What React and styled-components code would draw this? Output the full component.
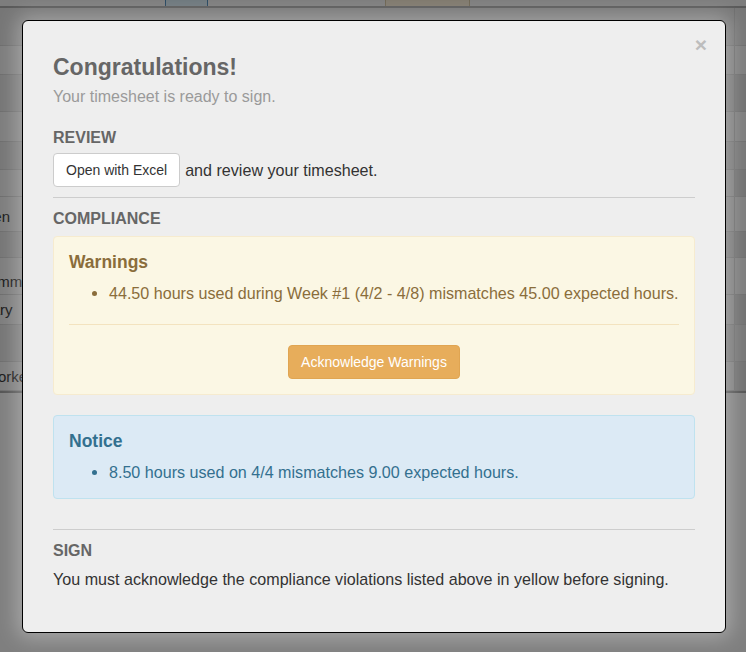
import React from "react";
import styled, { createGlobalStyle } from "styled-components";

const GlobalStyle = createGlobalStyle`
  html, body { margin: 0; padding: 0; }
  body {
    background: #fff;
    font-family: "Liberation Sans", Arial, Helvetica, sans-serif;
    color: #333;
    overflow: hidden;
  }
`;

const Page = styled.div`
  position: relative;
  width: 746px;
  height: 652px;
  overflow: hidden;
  background: #fff;
`;

const TopBar = styled.div`
  display: flex;
  gap: 177px;
  height: 6px;
  padding-left: 165px;
  background: #fafafa;
  border-bottom: 2px solid #b2b2b2;
  box-shadow: 0 2px 5px rgba(0, 0, 0, 0.25);
`;

const Tab = styled.div`
  width: ${(p) => p.w}px;
  box-sizing: border-box;
  background: ${(p) => (p.tone === "blue" ? "#dcf0fa" : "#fff2da")};
  border-left: 1px solid ${(p) => (p.tone === "blue" ? "#4f8ec0" : "#d9c9a4")};
  border-right: 1px solid ${(p) => (p.tone === "blue" ? "#4f8ec0" : "#d9c9a4")};
`;

const Table = styled.div`
  margin-left: -30px;
  border-bottom: 2px solid #a8a8a8;
`;

const Row = styled.div`
  display: grid;
  grid-template-columns: 1fr 12px;
  box-sizing: border-box;
  height: ${(p) => p.h}px;
  background: ${(p) => (p.shade ? "#ececec" : "#fafafa")};
  border-bottom: 1px solid #dadada;
`;

const Label = styled.div`
  display: flex;
  align-items: center;
  padding-left: ${(p) => p.indent || 0}px;
  padding-top: ${(p) => p.drop || 0}px;
  font-size: 15px;
  color: #333;
  white-space: nowrap;
`;

const EndCell = styled.div`
  border-left: 1px solid #d8d8d8;
  background: ${(p) => (p.shade ? "#e2e2e2" : "transparent")};
`;

const Backdrop = styled.div`
  position: absolute;
  inset: 0;
  background: rgba(0, 0, 0, 0.5);
`;

const Modal = styled.div`
  position: absolute;
  left: 22px;
  top: 20px;
  width: 704px;
  box-sizing: border-box;
  padding: 30px 30px 32px;
  background: #eeeeee;
  border: 1px solid #000;
  border-radius: 6px;
  box-shadow: 0 0 20px 5px rgba(255, 255, 255, 0.32);
`;

const Close = styled.button`
  position: absolute;
  top: 13px;
  right: 18px;
  padding: 0;
  border: 0;
  background: none;
  font-family: "Liberation Sans", Arial, sans-serif;
  font-size: 21px;
  font-weight: bold;
  line-height: 1;
  color: #bdbdbd;
  cursor: pointer;
`;

const Title = styled.h2`
  margin: 0;
  font-size: 23px;
  font-weight: bold;
  line-height: 32px;
  color: #666;
`;

const Subtitle = styled.p`
  margin: 3px 0 0;
  font-size: 16px;
  line-height: 22px;
  color: #9a9a9a;
`;

const SectionTitle = styled.h5`
  margin: ${(p) => p.top || 0}px 0 ${(p) => p.bottom ?? 6}px;
  font-size: 16px;
  font-weight: bold;
  line-height: 22px;
  color: #666;
`;

const Text = styled.p`
  margin: 0 0 ${(p) => p.bottom || 0}px;
  font-size: 16.1px;
  line-height: 22px;
  color: #333;
`;

const ReviewRow = styled.div`
  display: flex;
  align-items: center;
  gap: 5px;
  height: 34px;
  margin-top: -1px;
  margin-bottom: 1px;
  font-size: 16.1px;
  color: #333;
`;

const Divider = styled.hr`
  margin: ${(p) => p.top || 10}px 0 10px;
  border: 0;
  border-top: 1px solid #cdcdcd;
`;

const Button = styled.button`
  display: inline-block;
  box-sizing: border-box;
  height: 34px;
  padding: 0 12px;
  font-family: "Liberation Sans", Arial, sans-serif;
  font-size: 14px;
  line-height: 32px;
  border-radius: 4px;
  cursor: pointer;
  color: ${(p) => (p.variant === "warning" ? "#fff" : "#333")};
  background: ${(p) => (p.variant === "warning" ? "#e7ad5b" : "#fff")};
  border: 1px solid ${(p) => (p.variant === "warning" ? "#e0a552" : "#cccccc")};
`;

const alertTones = {
  warning: { bg: "#fbf7e4", border: "#f6ebcf", color: "#8a6d3b", rule: "#f3e3bf" },
  info: { bg: "#dceaf5", border: "#bfe2ef", color: "#33708f", rule: "#a6e1ec" },
};

const Alert = styled.div`
  margin-bottom: 20px;
  padding: 15px;
  border-radius: 4px;
  background: ${(p) => alertTones[p.tone].bg};
  border: 1px solid ${(p) => alertTones[p.tone].border};
  color: ${(p) => alertTones[p.tone].color};
`;

const AlertTitle = styled.h4`
  margin: 0;
  font-size: 17.5px;
  font-weight: bold;
  line-height: 20px;
  color: inherit;
`;

const AlertList = styled.ul`
  margin: 10px 0 0;
  padding-left: 40px;
  font-size: 16.1px;
  line-height: 22px;
`;

const AlertRule = styled.hr`
  margin: 20px 0;
  border: 0;
  border-top: 1px solid ${(p) => alertTones[p.tone].rule};
`;

const AlertActions = styled.div`
  display: flex;
  justify-content: center;
`;

const rows = [
  { h: 38, shade: true },
  { h: 29 },
  { h: 37, shade: true, end: true },
  { h: 30 },
  { h: 28, shade: true },
  { h: 27, end: true },
  { h: 35, label: "Taken", drop: 4 },
  { h: 26, shade: true, end: true },
  { h: 37, label: "Comments", indent: 8, drop: 10 },
  { h: 30, label: "Salary", end: true },
  { h: 37, shade: true },
  { h: 29, label: "Worked", indent: 14, end: true },
];

export default function App() {
  return (
    <Page>
      <GlobalStyle />
      <TopBar>
        <Tab w={43} tone="blue" />
        <Tab w={85} tone="tan" />
      </TopBar>
      <Table>
        {rows.map((r, i) => (
          <Row key={i} h={r.h} shade={r.shade}>
            <Label indent={r.indent} drop={r.drop}>{r.label}</Label>
            <EndCell shade={r.end} />
          </Row>
        ))}
      </Table>
      <Backdrop />
      <Modal>
        <Close aria-label="Close">×</Close>
        <Title>Congratulations!</Title>
        <Subtitle>Your timesheet is ready to sign.</Subtitle>

        <SectionTitle top={19} bottom={5}>REVIEW</SectionTitle>
        <ReviewRow>
          <Button>Open with Excel</Button>
          <span>and review your timesheet.</span>
        </ReviewRow>
        <Divider />

        <SectionTitle>COMPLIANCE</SectionTitle>
        <Alert tone="warning">
          <AlertTitle>Warnings</AlertTitle>
          <AlertList>
            <li>
              44.50 hours used during Week #1 (4/2 - 4/8) mismatches 45.00 expected hours.
            </li>
          </AlertList>
          <AlertRule tone="warning" />
          <AlertActions>
            <Button variant="warning">Acknowledge Warnings</Button>
          </AlertActions>
        </Alert>
        <Alert tone="info">
          <AlertTitle>Notice</AlertTitle>
          <AlertList>
            <li>8.50 hours used on 4/4 mismatches 9.00 expected hours.</li>
          </AlertList>
        </Alert>
        <Divider top={30} />

        <SectionTitle>SIGN</SectionTitle>
        <Text bottom={10}>
          You must acknowledge the compliance violations listed above in yellow before signing.
        </Text>
      </Modal>
    </Page>
  );
}
